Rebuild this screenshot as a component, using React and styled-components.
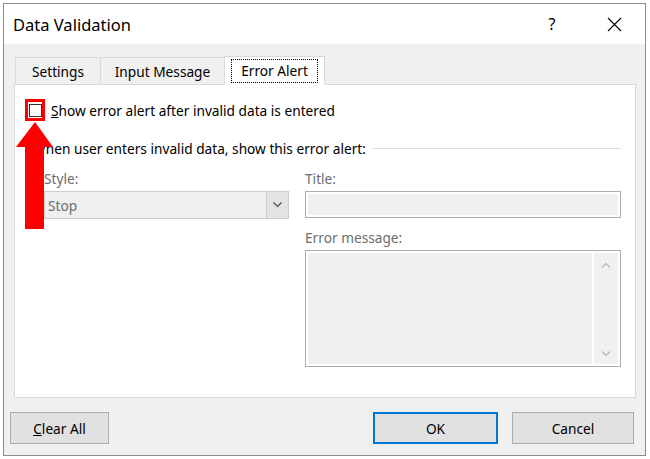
import React from 'react';
import styled, { createGlobalStyle } from 'styled-components';

const GlobalStyle = createGlobalStyle`
  html, body {
    margin: 0;
    padding: 0;
    background: #fff;
  }
  body {
    font-family: "Noto Sans", "Open Sans", sans-serif;
    color: #000;
  }
`;

const Page = styled.div`
  width: 650px;
  height: 459px;
  padding: 3px 0 0 3px;
  box-sizing: border-box;
`;

const Window = styled.div`
  position: relative;
  width: 643px;
  height: 453px;
  box-sizing: border-box;
  border: 1px solid #8c8c8c;
  background: #f0f0f0;
  display: flex;
  flex-direction: column;
`;

const TitleBar = styled.div`
  height: 40px;
  background: #fff;
  display: flex;
  align-items: center;
  padding-left: 9px;
  flex-shrink: 0;
`;

const Title = styled.div`
  font-size: 16.5px;
  flex: 1;
`;

const TitleButton = styled.div`
  width: 62px;
  height: 40px;
  display: flex;
  align-items: center;
  justify-content: center;
  font-size: 16px;
`;

const Body = styled.div`
  flex: 1;
  display: flex;
  flex-direction: column;
  padding: 11px 9px 0 10px;
`;

const TabStrip = styled.div`
  display: flex;
  align-items: flex-end;
  height: 29px;
  padding-left: 1px;
  position: relative;
  z-index: 1;
`;

const Tab = styled.div`
  width: ${(p) => p.$w}px;
  height: ${(p) => (p.$active ? 29 : 27)}px;
  box-sizing: border-box;
  display: flex;
  align-items: center;
  justify-content: center;
  font-size: 13.7px;
  background: ${(p) => (p.$active ? '#fff' : '#f0f0f0')};
  border: 1px solid #d9d9d9;
  border-bottom: ${(p) => (p.$active ? '1px solid #fff' : 'none')};
  margin-left: ${(p) => (p.$first ? 0 : -1)}px;
  margin-bottom: ${(p) => (p.$active ? -1 : 0)}px;
`;

const FocusBox = styled.span`
  border: 1px dotted #000;
  padding: 1px 9px 2px;
`;

const Panel = styled.div`
  position: relative;
  height: 314px;
  box-sizing: border-box;
  background: #fff;
  border: 1px solid #d9d9d9;
  padding: 14px 14px 0 10px;
`;

const CheckRow = styled.label`
  display: flex;
  align-items: center;
  gap: 6px;
  font-size: 13.7px;
  height: 22px;
`;

const Highlight = styled.span`
  width: 14px;
  height: 16px;
  border: 3px solid #f00;
  display: flex;
  align-items: center;
  justify-content: center;
`;

const CheckBox = styled.span`
  width: 13px;
  height: 13px;
  box-sizing: border-box;
  border: 1px solid #333;
  background: #fff;
`;

const GroupHeading = styled.div`
  display: flex;
  align-items: center;
  gap: 7px;
  margin-top: 18px;
  padding-left: 8px;
  font-size: 13.7px;

  &::after {
    content: '';
    flex: 1;
    height: 1px;
    background: #dcdcdc;
  }
`;

const FieldGrid = styled.div`
  display: grid;
  grid-template-columns: 245px 316px;
  column-gap: 16px;
  margin-top: 11px;
  padding-left: 19px;
  align-items: start;
`;

const Column = styled.div`
  display: flex;
  flex-direction: column;
`;

const Label = styled.div`
  font-size: 13.7px;
  color: #6d6d6d;
  height: 19px;
  line-height: 19px;
  margin-bottom: 3px;
  margin-top: ${(p) => p.$top || 0}px;
`;

const Combo = styled.div`
  height: 28px;
  box-sizing: border-box;
  border: 1px solid #cccccc;
  background: #efefef;
  display: flex;
  align-items: stretch;
`;

const ComboValue = styled.div`
  flex: 1;
  display: flex;
  align-items: center;
  padding-left: 3px;
  font-size: 13.7px;
  color: #6d6d6d;
`;

const ComboButton = styled.div`
  width: 21px;
  border-left: 1px solid #cccccc;
  background: #e3e3e3;
  display: flex;
  align-items: center;
  justify-content: center;
`;

const TextBox = styled.div`
  height: ${(p) => p.$h}px;
  box-sizing: border-box;
  border: 1px solid #adadad;
  padding: 2px;
  background: #fff;
  display: flex;
`;

const Fill = styled.div`
  flex: 1;
  background: #f0f0f0;
`;

const ScrollBar = styled.div`
  width: 24px;
  margin-left: 2px;
  background: #f0f0f0;
  display: flex;
  flex-direction: column;
  justify-content: space-between;
  align-items: center;
  padding: 9px 0 7px;
`;

const Arrow = styled.svg`
  position: absolute;
  left: 1px;
  top: 37px;
`;

const Footer = styled.div`
  display: flex;
  align-items: center;
  padding-top: 14px;
  margin-left: -4px;
`;

const Button = styled.div`
  width: ${(p) => p.$w}px;
  height: 32px;
  box-sizing: border-box;
  border: ${(p) => (p.$default ? '2px solid #0078d7' : '1px solid #adadad')};
  background: #e1e1e1;
  display: flex;
  align-items: center;
  justify-content: center;
  font-size: 13.7px;
  margin-left: ${(p) => p.$ml || 0}px;
`;

const Key = styled.span`
  text-decoration: underline;
`;

const Chevron = ({ up, color = '#555', w = 10 }) => (
  <svg width={w} height={6} viewBox="0 0 10 6">
    <path
      d={up ? 'M1 5.5 L5 1.5 L9 5.5' : 'M1 0.5 L5 4.5 L9 0.5'}
      fill="none"
      stroke={color}
      strokeWidth="1.1"
    />
  </svg>
);

const App = () => (
  <Page>
    <GlobalStyle />
    <Window>
      <TitleBar>
        <Title>Data Validation</Title>
        <TitleButton>?</TitleButton>
        <TitleButton>
          <svg width="15" height="15" viewBox="0 0 15 15">
            <path d="M1 1 L14 14 M14 1 L1 14" stroke="#000" strokeWidth="1.1" />
          </svg>
        </TitleButton>
      </TitleBar>
      <Body>
        <TabStrip>
          <Tab $first $w={86}>Settings</Tab>
          <Tab $w={125}>Input Message</Tab>
          <Tab $active $w={101}>
            <FocusBox>Error Alert</FocusBox>
          </Tab>
        </TabStrip>
        <Panel>
          <CheckRow>
            <Highlight>
              <CheckBox />
            </Highlight>
            <span>
              <Key>S</Key>how error alert after invalid data is entered
            </span>
          </CheckRow>
          <GroupHeading>When user enters invalid data, show this error alert:</GroupHeading>
          <FieldGrid>
            <Column>
              <Label>Style:</Label>
              <Combo>
                <ComboValue>Stop</ComboValue>
                <ComboButton>
                  <Chevron color="#444" w={11} />
                </ComboButton>
              </Combo>
            </Column>
            <Column>
              <Label>Title:</Label>
              <TextBox $h={27}>
                <Fill />
              </TextBox>
              <Label $top={10}>Error message:</Label>
              <TextBox $h={117}>
                <Fill />
                <ScrollBar>
                  <Chevron up color="#b5b5b5" w={12} />
                  <Chevron color="#b5b5b5" w={12} />
                </ScrollBar>
              </TextBox>
            </Column>
          </FieldGrid>
          <Arrow width="38" height="107" viewBox="0 0 38 107">
            <polygon points="19,0 37,25 28,25 28,107 9,107 9,25 0,25" fill="#f00" />
          </Arrow>
        </Panel>
        <Footer>
          <Button $w={99}>
            <span>
              <Key>C</Key>lear All
            </span>
          </Button>
          <Button $w={125} $ml={264} $default>
            OK
          </Button>
          <Button $w={122} $ml={14}>
            Cancel
          </Button>
        </Footer>
      </Body>
    </Window>
  </Page>
);

export default App;
